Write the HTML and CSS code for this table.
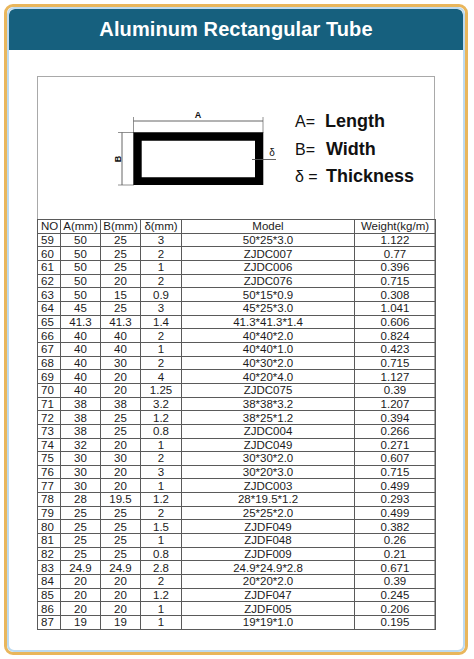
FILE: index.html
```html
<!DOCTYPE html>
<html>
<head>
<meta charset="utf-8">
<link rel="stylesheet" href="styles.css">
</head>
<body>
<div class="frame">
  <div class="inner">
    <div class="header">Aluminum Rectangular Tube</div>
    <div class="content">
      <div class="box">
        <svg class="diagram" width="396" height="142" viewBox="0 0 396 142">
          <line x1="95.5" y1="40" x2="95.5" y2="56" stroke="#777" stroke-width="0.8"/>
          <line x1="225" y1="40" x2="225" y2="56" stroke="#777" stroke-width="0.8"/>
          <line x1="95.5" y1="44" x2="225" y2="44" stroke="#555" stroke-width="0.9"/>
          <text x="160" y="41" class="dimlbl" text-anchor="middle">A</text>
          <line x1="80" y1="55.5" x2="96" y2="55.5" stroke="#777" stroke-width="0.8"/>
          <line x1="80" y1="108" x2="96" y2="108" stroke="#777" stroke-width="0.8"/>
          <line x1="84" y1="55.5" x2="84" y2="108" stroke="#555" stroke-width="0.9"/>
          <text x="0" y="0" class="dimlbl" text-anchor="middle" transform="translate(82.5 82) rotate(-90)">B</text>
          <path d="M95.3 55.3 H225.3 V108 H95.3 Z M103.7 63.7 V100.3 H217 V63.7 Z" fill="#000" fill-rule="evenodd"/>
          <line x1="214" y1="82.5" x2="238" y2="82.5" stroke="#555" stroke-width="0.9"/>
          <text x="234" y="78.5" class="dimlbl delta" text-anchor="middle">δ</text>
          <text x="257" y="50" class="eq">A=</text>
          <text x="287" y="50" class="term">Length</text>
          <text x="257" y="78" class="eq">B=</text>
          <text x="288" y="78" class="term">Width</text>
          <text x="257" y="104.5" class="eq">δ =</text>
          <text x="288" y="104.5" class="term">Thickness</text>
        </svg>
        <table class="spec">
          <colgroup>
            <col class="c-no"><col class="c-a"><col class="c-b"><col class="c-d"><col class="c-model"><col class="c-w">
          </colgroup>
          <tr><td class="no">NO</td><td>A(mm)</td><td>B(mm)</td><td>δ(mm)</td><td>Model</td><td>Weight(kg/m)</td></tr>
          <tr><td class="no">59</td><td>50</td><td>25</td><td>3</td><td>50*25*3.0</td><td>1.122</td></tr>
          <tr><td class="no">60</td><td>50</td><td>25</td><td>2</td><td>ZJDC007</td><td>0.77</td></tr>
          <tr><td class="no">61</td><td>50</td><td>25</td><td>1</td><td>ZJDC006</td><td>0.396</td></tr>
          <tr><td class="no">62</td><td>50</td><td>20</td><td>2</td><td>ZJDC076</td><td>0.715</td></tr>
          <tr><td class="no">63</td><td>50</td><td>15</td><td>0.9</td><td>50*15*0.9</td><td>0.308</td></tr>
          <tr><td class="no">64</td><td>45</td><td>25</td><td>3</td><td>45*25*3.0</td><td>1.041</td></tr>
          <tr><td class="no">65</td><td>41.3</td><td>41.3</td><td>1.4</td><td>41.3*41.3*1.4</td><td>0.606</td></tr>
          <tr><td class="no">66</td><td>40</td><td>40</td><td>2</td><td>40*40*2.0</td><td>0.824</td></tr>
          <tr><td class="no">67</td><td>40</td><td>40</td><td>1</td><td>40*40*1.0</td><td>0.423</td></tr>
          <tr><td class="no">68</td><td>40</td><td>30</td><td>2</td><td>40*30*2.0</td><td>0.715</td></tr>
          <tr><td class="no">69</td><td>40</td><td>20</td><td>4</td><td>40*20*4.0</td><td>1.127</td></tr>
          <tr><td class="no">70</td><td>40</td><td>20</td><td>1.25</td><td>ZJDC075</td><td>0.39</td></tr>
          <tr><td class="no">71</td><td>38</td><td>38</td><td>3.2</td><td>38*38*3.2</td><td>1.207</td></tr>
          <tr><td class="no">72</td><td>38</td><td>25</td><td>1.2</td><td>38*25*1.2</td><td>0.394</td></tr>
          <tr><td class="no">73</td><td>38</td><td>25</td><td>0.8</td><td>ZJDC004</td><td>0.266</td></tr>
          <tr><td class="no">74</td><td>32</td><td>20</td><td>1</td><td>ZJDC049</td><td>0.271</td></tr>
          <tr><td class="no">75</td><td>30</td><td>30</td><td>2</td><td>30*30*2.0</td><td>0.607</td></tr>
          <tr><td class="no">76</td><td>30</td><td>20</td><td>3</td><td>30*20*3.0</td><td>0.715</td></tr>
          <tr><td class="no">77</td><td>30</td><td>20</td><td>1</td><td>ZJDC003</td><td>0.499</td></tr>
          <tr><td class="no">78</td><td>28</td><td>19.5</td><td>1.2</td><td>28*19.5*1.2</td><td>0.293</td></tr>
          <tr><td class="no">79</td><td>25</td><td>25</td><td>2</td><td>25*25*2.0</td><td>0.499</td></tr>
          <tr><td class="no">80</td><td>25</td><td>25</td><td>1.5</td><td>ZJDF049</td><td>0.382</td></tr>
          <tr><td class="no">81</td><td>25</td><td>25</td><td>1</td><td>ZJDF048</td><td>0.26</td></tr>
          <tr><td class="no">82</td><td>25</td><td>25</td><td>0.8</td><td>ZJDF009</td><td>0.21</td></tr>
          <tr><td class="no">83</td><td>24.9</td><td>24.9</td><td>2.8</td><td>24.9*24.9*2.8</td><td>0.671</td></tr>
          <tr><td class="no">84</td><td>20</td><td>20</td><td>2</td><td>20*20*2.0</td><td>0.39</td></tr>
          <tr><td class="no">85</td><td>20</td><td>20</td><td>1.2</td><td>ZJDF047</td><td>0.245</td></tr>
          <tr><td class="no">86</td><td>20</td><td>20</td><td>1</td><td>ZJDF005</td><td>0.206</td></tr>
          <tr><td class="no">87</td><td>19</td><td>19</td><td>1</td><td>19*19*1.0</td><td>0.195</td></tr>
        </table>
      </div>
    </div>
  </div>
</div>
</body>
</html>
```

FILE: styles.css
```css
html, body {
  margin: 0;
  padding: 0;
  background: #ffffff;
}

body {
  font-family: "Liberation Sans", Arial, sans-serif;
  padding: 4px 0 0 4px;
}

.frame {
  box-sizing: border-box;
  width: 464px;
  height: 651px;
  border: 3px solid #e9b65c;
  border-radius: 9px;
  background: #ffffff;
}

.inner {
  box-sizing: border-box;
  height: 100%;
  border: 2px solid #bcdaf0;
  border-radius: 7px;
  display: flex;
  flex-direction: column;
  overflow: hidden;
}

.header {
  height: 41px;
  background: #16607e;
  color: #ffffff;
  font-weight: bold;
  font-size: 20px;
  display: flex;
  align-items: center;
  justify-content: center;
  border-radius: 6px 6px 0 0;
  letter-spacing: 0.1px;
  flex-shrink: 0;
}

.content {
  padding: 26px 26px 0 28px;
}

.box {
  width: 398px;
  box-sizing: border-box;
  border: 1px solid #a9a9a9;
  border-bottom: none;
  display: flex;
  flex-direction: column;
}

.diagram {
  display: block;
}

.dimlbl {
  font-family: "Liberation Sans", Arial, sans-serif;
  font-size: 9px;
  font-weight: bold;
  fill: #111;
}

.delta {
  font-weight: normal;
  font-size: 10px;
}

.eq {
  font-family: "Liberation Sans", Arial, sans-serif;
  font-size: 16px;
  fill: #111;
}

.term {
  font-family: "Liberation Sans", Arial, sans-serif;
  font-size: 18px;
  font-weight: bold;
  fill: #111;
}

.spec {
  width: 398px;
  margin-left: -1px;
  table-layout: fixed;
  border-collapse: collapse;
  font-size: 11.5px;
  color: #1c1c1c;
}

.c-no { width: 23px; }
.c-a { width: 40px; }
.c-b { width: 40px; }
.c-d { width: 41px; }
.c-model { width: 173px; }
.c-w { width: 81px; }

.spec td {
  border: 1px solid #5a5a5a;
  height: 12.67px;
  padding: 0;
  line-height: 12px;
  text-align: center;
  white-space: nowrap;
  overflow: hidden;
}

.spec td.no {
  text-align: left;
  padding-left: 3px;
}
```
